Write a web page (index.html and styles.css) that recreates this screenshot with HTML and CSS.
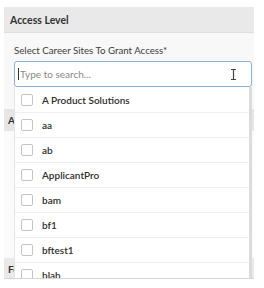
FILE: index.html
```html
<!DOCTYPE html>
<html>
<head>
<meta charset="utf-8">
<link rel="stylesheet" href="styles.css">
</head>
<body>
<div class="panel">
  <div class="header">Access Level</div>
  <div class="content">
    <div class="label">Select Career Sites To Grant Access*</div>
    <div class="combo">
      <div class="input">
        <span class="caret"></span><span class="placeholder">Type to search...</span>
        <svg class="ibeam" width="7" height="11" viewBox="0 0 7 11"><path d="M1 0.5h5M1 10.5h5M3.5 0.5v10" stroke="#444" stroke-width="1.2" fill="none"/></svg>
      </div>
      <div class="under">
        <div class="bg-head">Assigned Roles</div>
        <div class="bg-body"></div>
        <div class="bg-head bg-foot">Footer</div>
      </div>
      <ul class="dropdown">
        <li><span class="box"></span>A Product Solutions</li>
        <li><span class="box"></span>aa</li>
        <li><span class="box"></span>ab</li>
        <li><span class="box"></span>ApplicantPro</li>
        <li><span class="box"></span>bam</li>
        <li><span class="box"></span>bf1</li>
        <li><span class="box"></span>bftest1</li>
        <li><span class="box"></span>blah</li>
      </ul>
    </div>
  </div>
</div>
</body>
</html>
```
FILE: styles.css
```css
* { box-sizing: border-box; }
body {
  margin: 0;
  background: #fff;
  font-family: Lato, "Open Sans", sans-serif;
  color: #333;
}
.panel {
  margin: 7px 0 0 4px;
  width: 250px;
  height: 272px;
  overflow: hidden;
  background: #f8f8f8;
  border-bottom: 1px solid #d6d6d6;
}
.header {
  height: 26px;
  background: #e9e9e9;
  border-bottom: 1px solid #dedede;
  font-size: 10.5px;
  font-weight: 700;
  padding: 7px 0 0 6px;
  color: #333;
}
.content {
  padding: 11px 0 0 10px;
}
.label {
  font-size: 9.7px;
  color: #3d3d3d;
  height: 17px;
}
.combo {
  position: relative;
}
.input {
  height: 26px;
  width: 238px;
  border: 1px solid #8eb0d8;
  border-radius: 3px;
  background: #fff;
  display: flex;
  align-items: center;
  padding-left: 3px;
  font-size: 10px;
}
.caret {
  width: 1px;
  height: 12px;
  background: #333;
  margin-right: 1px;
}
.placeholder {
  color: #888;
  flex: 1;
}
.ibeam {
  margin-right: 14px;
}
.under {
  margin-left: -10px;
  padding-top: 22px;
}
.bg-head {
  height: 22px;
  background: #e6e6e6;
  font-size: 10px;
  font-weight: 700;
  padding: 5px 0 0 4px;
  color: #333;
}
.bg-body {
  height: 127px;
  background: #fbfbfb;
}
.bg-foot {
  background: #e9e9e9;
}
.dropdown {
  position: absolute;
  top: 26px;
  left: 0;
  width: 238px;
  margin: 0;
  padding: 1px 0 0;
  list-style: none;
  background: #fff;
  border-left: 1px solid #e4e4e4;
  border-right: 3px solid #dcdcdc;
}
.dropdown li {
  height: 25px;
  display: flex;
  align-items: center;
  padding-left: 6px;
  font-size: 10px;
  font-weight: 600;
  color: #2e2e2e;
  border-bottom: 1px solid #f0f0f0;
}
.box {
  width: 12px;
  height: 12px;
  border: 1px solid #c4c4c4;
  border-radius: 2px;
  margin-right: 9px;
  background: #fff;
}
```
